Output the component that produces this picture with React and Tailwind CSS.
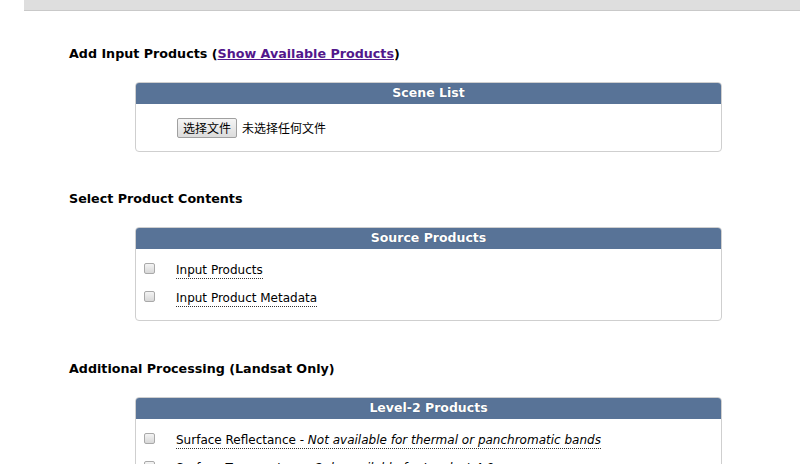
const font = { fontFamily: '"DejaVu Sans", Verdana, sans-serif' }

function Check() {
  return (
    <span className="inline-block w-[11px] h-[11px] rounded-[2px] border border-[#a9a9a9] bg-gradient-to-b from-[#f4f4f4] to-[#d8d8d8] shrink-0 -translate-y-[2px]" />
  )
}

function Panel({ title, children }) {
  return (
    <div className="ml-[66px] w-[587px] rounded-[4px] border border-[#cfcfcf] overflow-hidden">
      <div className="h-[21px] bg-[#587397] text-white text-[12.5px] font-bold flex items-center justify-center [text-shadow:0_0_1px_rgba(0,0,0,0.35)]">
        {title}
      </div>
      {children}
    </div>
  )
}

function Item({ children }) {
  return (
    <div className="flex items-center h-[28px]">
      <div className="w-[40px] pl-[8px] flex items-center"><Check /></div>
      <span className="border-b border-dotted border-[#333] leading-[16px]">{children}</span>
    </div>
  )
}

export default function App() {
  return (
    <div className="min-h-[464px] bg-white text-[12px] text-black" style={font}>
      <div className="ml-[24px] h-[11px] bg-[#dedede] border-b border-[#c9c9c9]" />
      <div className="pl-[69px]">
        <h2 className="mt-[35px] text-[12.7px] font-bold leading-[16px]">
          Add Input Products (<a href="#" className="text-[#52188c] underline">Show Available Products</a>)
        </h2>
        <div className="mt-[20px]">
          <Panel title="Scene List">
            <div className="pt-[14px] pb-[13px] pl-[41px] flex items-center gap-[5px]" style={{ fontFamily: '"Noto Sans CJK SC", sans-serif' }}>
              <span className="h-[20px] px-[5px] flex items-center border border-[#a0a0a0] rounded-[2px] bg-gradient-to-b from-[#f5f5f5] to-[#dcdcdc] text-[12px]">选择文件</span>
              <span className="text-[12px]">未选择任何文件</span>
            </div>
          </Panel>
        </div>

        <h2 className="mt-[39px] text-[12.7px] font-bold leading-[16px]">Select Product Contents</h2>
        <div className="mt-[20px]">
          <Panel title="Source Products">
            <div className="pt-[7px] pb-[8px]">
              <Item>Input Products</Item>
              <Item>Input Product Metadata</Item>
            </div>
          </Panel>
        </div>

        <h2 className="mt-[40px] text-[12.7px] font-bold leading-[16px]">Additional Processing (Landsat Only)</h2>
        <div className="mt-[20px]">
          <Panel title="Level-2 Products">
            <div className="pt-[7px] pb-[8px]">
              <Item>Surface Reflectance - <i>Not available for thermal or panchromatic bands</i></Item>
              <Item>Surface Temperature - <i>Only available for Landsat 4-9</i></Item>
            </div>
          </Panel>
        </div>
      </div>
    </div>
  )
}
